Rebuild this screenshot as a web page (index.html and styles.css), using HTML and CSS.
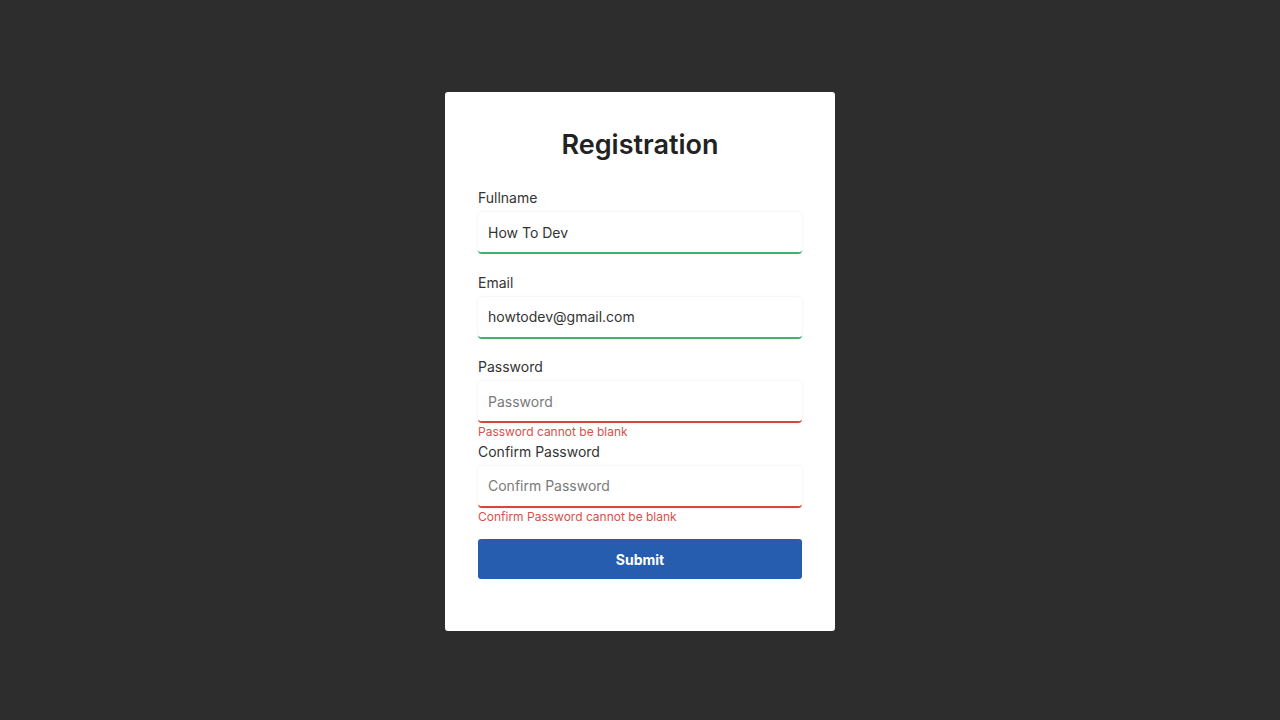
FILE: index.html
```html
<!DOCTYPE html>
<html lang="en">
<head>
<meta charset="utf-8">
<title>Registration</title>
<link rel="stylesheet" href="styles.css">
</head>
<body>
<div class="page">
  <form class="card" onsubmit="return false">
    <h1 class="title">Registration</h1>
    <div class="group success">
      <label class="label" for="fullname">Fullname</label>
      <input class="field" id="fullname" type="text" value="How To Dev">
      <div class="error"></div>
    </div>
    <div class="group success">
      <label class="label" for="email">Email</label>
      <input class="field" id="email" type="text" value="howtodev@gmail.com">
      <div class="error"></div>
    </div>
    <div class="group fail">
      <label class="label" for="password">Password</label>
      <input class="field" id="password" type="password" placeholder="Password">
      <div class="error">Password cannot be blank</div>
    </div>
    <div class="group fail">
      <label class="label" for="confirm">Confirm Password</label>
      <input class="field" id="confirm" type="password" placeholder="Confirm Password">
      <div class="error">Confirm Password cannot be blank</div>
    </div>
    <button class="submit" type="submit">Submit</button>
  </form>
</div>
</body>
</html>
```

FILE: styles.css
```css
* {
  box-sizing: border-box;
}

html, body {
  margin: 0;
  padding: 0;
  height: 100%;
}

body {
  background: #2d2d2d;
  font-family: "Inter", "Open Sans", sans-serif;
}

.page {
  display: flex;
  justify-content: center;
  padding-top: 92px;
}

.card {
  width: 390px;
  background: #ffffff;
  border-radius: 3px;
  padding: 33px 33px 52px;
  display: flex;
  flex-direction: column;
}

.title {
  margin: 0 0 24px;
  text-align: center;
  font-size: 27px;
  line-height: 39px;
  font-weight: 600;
  color: #222222;
}

.group {
  display: flex;
  flex-direction: column;
}

.label {
  font-size: 14px;
  line-height: 20px;
  color: #333333;
  margin-bottom: 4px;
}

.field {
  height: 42px;
  width: 100%;
  border: none;
  border-bottom: 2px solid transparent;
  border-radius: 4px;
  box-shadow: 0 0 3px rgba(0, 0, 0, 0.08);
  padding: 0 10px;
  font-family: inherit;
  font-size: 14px;
  color: #333333;
  background: #ffffff;
  outline: none;
}

.field::placeholder {
  color: #7a7a7a;
}

.success .field {
  border-bottom-color: #3cb371;
}

.fail .field {
  border-bottom-color: #d9453d;
}

.error {
  height: 18.5px;
  font-size: 12px;
  line-height: 18px;
  color: #d9504a;
}

.submit {
  margin-top: 13px;
  height: 40px;
  border: none;
  border-radius: 3px;
  background: #265daf;
  color: #ffffff;
  font-family: inherit;
  font-size: 14px;
  font-weight: 700;
  cursor: pointer;
}
```
